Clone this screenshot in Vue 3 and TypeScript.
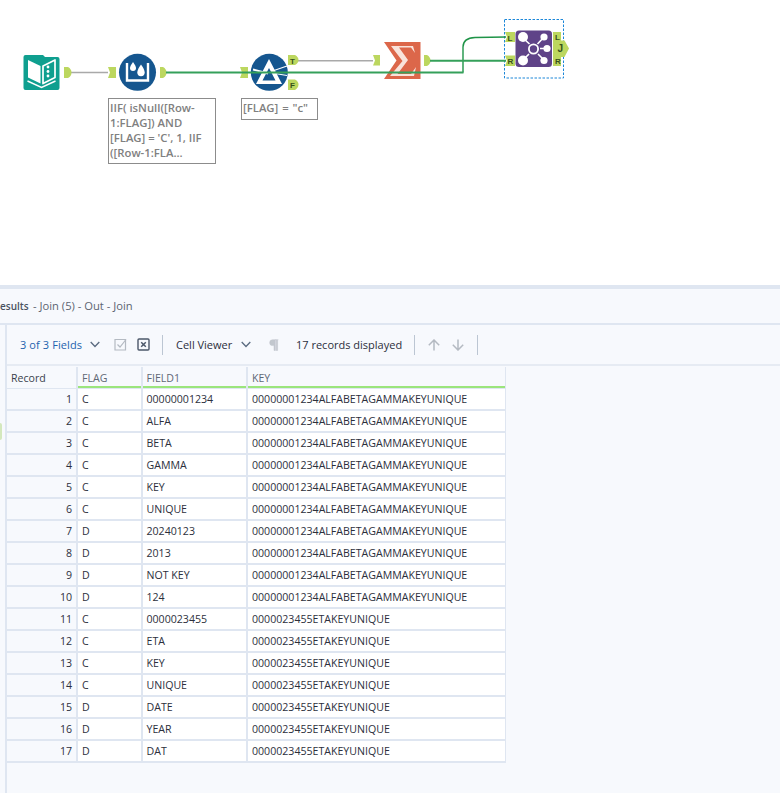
<script setup lang="ts">
interface Row { flag: string; field: string; key: string }
const a = '00000001234ALFABETAGAMMAKEYUNIQUE'
const b = '0000023455ETAKEYUNIQUE'
const rows: Row[] = [
  { flag: 'C', field: '00000001234', key: a },
  { flag: 'C', field: 'ALFA', key: a },
  { flag: 'C', field: 'BETA', key: a },
  { flag: 'C', field: 'GAMMA', key: a },
  { flag: 'C', field: 'KEY', key: a },
  { flag: 'C', field: 'UNIQUE', key: a },
  { flag: 'D', field: '20240123', key: a },
  { flag: 'D', field: '2013', key: a },
  { flag: 'D', field: 'NOT KEY', key: a },
  { flag: 'D', field: '124', key: a },
  { flag: 'C', field: '0000023455', key: b },
  { flag: 'C', field: 'ETA', key: b },
  { flag: 'C', field: 'KEY', key: b },
  { flag: 'C', field: 'UNIQUE', key: b },
  { flag: 'D', field: 'DATE', key: b },
  { flag: 'D', field: 'YEAR', key: b },
  { flag: 'D', field: 'DAT', key: b },
]
</script>

<template>
  <div class="page">
    <section class="canvas">
      <svg class="flow" width="780" height="285" viewBox="0 0 780 285">
        <!-- grey connectors -->
        <path d="M71 72.5H108" stroke="#a9a9a9" stroke-width="1.5" fill="none" />
        <path d="M298 60.7H373" stroke="#a9a9a9" stroke-width="1.5" fill="none" />

        <!-- input tool -->
        <path d="M25.5 55H43L45 57H57.5Q59.5 57 59.5 59V88Q59.5 90 57.5 90H25.5Q23.5 90 23.5 88V57Q23.5 55 25.5 55Z" fill="#0f9f8f" />
        <path d="M28 60L40.5 66V83.5L28 77.5Z" fill="#fff" />
        <path d="M43 66L55 60V77.5L43 83.5Z" fill="none" stroke="#fff" stroke-width="1.7" stroke-linejoin="round" />
        <path d="M27.5 81L41.5 87.5L55.5 81" fill="none" stroke="#fff" stroke-width="1.4" />
        <circle cx="48" cy="67" r="1.4" fill="#fff" />
        <circle cx="48" cy="71.5" r="1.4" fill="#fff" />
        <circle cx="48" cy="76" r="1.4" fill="#fff" />
        <path d="M64 67H68Q71.5 69 71.5 72.5T68 78H64Z" fill="#bcd75f" />

        <!-- formula tool -->
        <path d="M108 67H116V78H108L110 72.5Z" fill="#bcd75f" />
        <circle cx="137.5" cy="72.3" r="18.5" fill="#15568f" />
        <path d="M127 63V80.5H148V63" fill="none" stroke="#fff" stroke-width="2.4" />
        <path d="M133 62Q130 66 130 68A3 3 0 0 0 136 68Q136 66 133 62Z" fill="#fff" />
        <path d="M141 64.5Q137.3 69.5 137.3 72.5A3.7 3.7 0 0 0 144.7 72.5Q144.7 69.5 141 64.5Z" fill="#fff" />
        <path d="M160 67H163Q166.5 69 166.5 72.5T163 78H160Z" fill="#bcd75f" />

        <!-- filter tool -->
        <path d="M240 67H248V78H240L242 72.5Z" fill="#bcd75f" />
        <circle cx="269.3" cy="72.3" r="18.5" fill="#15568f" />
        <path d="M269 59L282 84H256Z M269 68L275.5 80.5H262.5Z" fill="#fff" fill-rule="evenodd" />
        <path d="M253 69.5L268 73.5" stroke="#fff" stroke-width="2" fill="none" />
        <path d="M274 70.5L287 66M275 73.5L287 75.5" stroke="#fff" stroke-width="1.2" fill="none" />
        <path d="M288 55H295Q298.5 57 298.5 60T295 65H288Z" fill="#bcd75f" />
        <path d="M288 79.5H295Q298.5 81.5 298.5 84.5T295 90H288Z" fill="#bcd75f" />
        <text x="290" y="63.5" class="anchor">T</text>
        <text x="290" y="88" class="anchor">F</text>

        <!-- summarize tool -->
        <path d="M373 55H380V65.5H373L375 60.5Z" fill="#bcd75f" />
        <path d="M384 42H420.5V79H384L396.5 60.5Z" fill="#dc674a" />
        <path d="M391 46H413L415 53L411 47.5H399L408 60L397.5 74H411L416 67L414 76H390L402.5 61Z" fill="#f9e3db" />
        <path d="M424 55H427Q430.5 57 430.5 60.5T427 66H424Z" fill="#bcd75f" />

        <!-- join tool -->
        <rect x="504.5" y="19.5" width="59" height="58.5" fill="none" stroke="#1c87d8" stroke-width="1" stroke-dasharray="2.5 1.5" />
        <path d="M505 32H515V42H505L507 37Z" fill="#bcd75f" />
        <path d="M505 55.5H515V66H505L507 60.7Z" fill="#bcd75f" />
        <rect x="515.5" y="30.5" width="36.5" height="36.5" rx="3.5" fill="#5f4388" />
        <g stroke="#fff" stroke-width="1.6" fill="none">
          <path d="M523 38L529.5 44M544 37L537.5 44M529 54L523 60M538 54L544 60M540 48.5H547" />
          <circle cx="533.5" cy="49" r="4.6" stroke-width="1.8" />
        </g>
        <g fill="#fff">
          <circle cx="523" cy="37" r="5" />
          <circle cx="544" cy="37" r="3.6" />
          <circle cx="547" cy="48.5" r="3.6" />
          <circle cx="523" cy="60.5" r="5" />
          <circle cx="544" cy="60.5" r="3.6" />
        </g>
        <path d="M553 32H561V41H553Z M553 56.5H561V66H553Z" fill="#bcd75f" />
        <path d="M553 40.5H564.5L569 48.5L564.5 57H553Z" fill="#bcd75f" />

        <!-- green connectors run over the tools -->
        <path d="M463 72.5V47Q463 38 475 37.5L506 37" stroke="#1f9448" stroke-width="1.4" fill="none" />
        <path d="M166 72.5H463.5" stroke="#35a05a" stroke-width="2" fill="none" />
        <path d="M430 60.7H506" stroke="#35a05a" stroke-width="2" fill="none" />

        <text x="507.5" y="40.5" class="anchor">L</text>
        <text x="507.5" y="64" class="anchor">R</text>
        <text x="555" y="39.5" class="anchor">L</text>
        <text x="557.5" y="52" class="anchor anchor-j">J</text>
        <text x="555" y="64" class="anchor">R</text>
      </svg>

      <div class="note note-formula">IIF( isNull([Row-<br />1:FLAG]) AND<br />[FLAG] = 'C', 1, IIF<br />([Row-1:FLA...</div>
      <div class="note note-filter">[FLAG] = "c"</div>
    </section>

    <div class="band band-top"></div>
    <header class="title"><b>esults</b><span class="crumb">- Join (5) - Out - Join</span></header>
    <div class="band band-mid"></div>

    <div class="body">
      <aside class="rail"><span class="rail-mark"></span></aside>
      <main class="main">
        <div class="toolbar">
          <span class="fields">3 of 3 Fields</span>
          <svg class="chev" width="10" height="7" viewBox="0 0 10 7"><path d="M.7 1L5 5.5L9.3 1" stroke="#5a6b80" stroke-width="1.3" fill="none" /></svg>
          <svg class="ic-check" width="13" height="13" viewBox="0 0 13 13"><path d="M1 1.5H11.5V12H1Z" fill="none" stroke="#b4bac2" stroke-width="1.2" /><path d="M3.5 6.5L6 9L12 1.5" fill="none" stroke="#b4bac2" stroke-width="1.2" /></svg>
          <svg class="ic-x" width="13" height="13" viewBox="0 0 13 13"><rect x="1" y="1" width="11" height="11" rx="1" fill="none" stroke="#4c586a" stroke-width="1.4" /><path d="M4.2 4.2L8.8 8.8M8.8 4.2L4.2 8.8" stroke="#4c586a" stroke-width="1.5" /></svg>
          <span class="sep sep-a"></span>
          <span class="viewer">Cell Viewer</span>
          <svg class="chev chev-b" width="10" height="7" viewBox="0 0 10 7"><path d="M.7 1L5 5.5L9.3 1" stroke="#5a6b80" stroke-width="1.3" fill="none" /></svg>
          <svg class="ic-para" width="10" height="12" viewBox="0 0 10 12"><path d="M9.5 .7H3.6A2.9 2.9 0 0 0 3.6 6.6H5V11.5H6.4V.7H7.2V11.5H8.6V.7" fill="#c2c7ce" stroke="#c2c7ce" stroke-width=".5" /></svg>
          <span class="count">17 records displayed</span>
          <span class="sep sep-b"></span>
          <svg class="ic-up" width="12" height="12" viewBox="0 0 12 12"><path d="M6 11.5V1M.8 6.2L6 1L11.2 6.2" stroke="#b4bac2" stroke-width="1.5" fill="none" /></svg>
          <svg class="ic-down" width="12" height="12" viewBox="0 0 12 12"><path d="M6 .5V11M.8 5.8L6 11L11.2 5.8" stroke="#b4bac2" stroke-width="1.5" fill="none" /></svg>
          <span class="sep sep-c"></span>
        </div>
        <div class="grid">
          <div class="hd">Record</div>
          <div class="hd field">FLAG</div>
          <div class="hd field">FIELD1</div>
          <div class="hd field">KEY</div>
          <template v-for="(r, i) in rows" :key="i">
            <div class="cell num">{{ i + 1 }}</div>
            <div class="cell">{{ r.flag }}</div>
            <div class="cell">{{ r.field }}</div>
            <div class="cell">{{ r.key }}</div>
          </template>
        </div>
      </main>
    </div>
  </div>
</template>

<style>
html, body { margin: 0; background: #f7f9fd; overflow: hidden; }
</style>

<style scoped>
.page {
  width: 780px;
  height: 793px;
  display: flex;
  flex-direction: column;
  overflow: hidden;
  font-family: "Open Sans", "Noto Sans", sans-serif;
  font-size: 11px;
  color: #2c2f3c;
  background: #f7f9fd;
}
.canvas { position: relative; height: 285px; flex: none; background: #fff; }
.flow { position: absolute; left: 0; top: 0; }
.anchor { font: 700 8px "Liberation Sans", sans-serif; fill: #35511a; }
.anchor-j { font-size: 10px; }
.note {
  position: absolute;
  box-sizing: border-box;
  border: 1px solid #8c8c8c;
  background: #fff;
  color: #808080;
  font-weight: 600;
  font-size: 11.3px;
  line-height: 15px;
  padding: 1px 1px 0 1px;
  white-space: nowrap;
}
.note-formula { left: 108px; top: 98px; width: 108px; height: 66px; }
.note-filter { left: 241px; top: 98px; width: 77px; height: 22px; word-spacing: 1px; }
.band { flex: none; background: #dfe6f1; }
.band-top { height: 4px; }
.band-mid { height: 2px; }
.title {
  flex: none;
  height: 34px;
  line-height: 34px;
  font-size: 11.2px;
  color: #5d6572;
  white-space: nowrap;
  display: flex;
}
.title b { color: #4a5260; font-weight: 600; font-size: 10px; width: 33px; flex: none; }
.body { flex: 1; display: flex; min-height: 0; }
.rail { position: relative; flex: none; width: 5px; border-right: 2px solid #dfe6f1; background: #f7f9fd; }
.rail-mark { position: absolute; left: 0; top: 98px; width: 2px; height: 17px; background: #d4e8bd; border-radius: 0 2px 2px 0; }
.main { flex: 1; min-width: 0; }
.toolbar {
  box-sizing: border-box;
  height: 41px;
  display: flex;
  align-items: center;
  border-bottom: 2px solid #e6ebf3;
}
.toolbar svg, .toolbar span { flex: none; }
.fields { margin-left: 13px; color: #1e63ae; width: 62px; white-space: nowrap; letter-spacing: .1px; }
.chev { margin-left: 8px; }
.ic-check { margin-left: 14px; }
.ic-x { margin-left: 10px; }
.sep { width: 1px; height: 20px; background: #bcc6d3; }
.sep-a { margin-left: 12px; }
.viewer { margin-left: 13px; width: 57px; white-space: nowrap; }
.chev-b { margin-left: 8px; }
.ic-para { margin-left: 18px; }
.count { margin-left: 17px; width: 107px; white-space: nowrap; }
.sep-b { margin-left: 11px; }
.ic-up { margin-left: 13px; }
.ic-down { margin-left: 12px; }
.sep-c { margin-left: 13px; }
.grid {
  display: grid;
  grid-template-columns: 69px 62.5px 103.5px 257px;
  grid-auto-rows: 20px;
  row-gap: 2px;
  column-gap: 2px;
  width: max-content;
  margin-top: 1px;
  font-size: 10.6px;
  background: #dfe6f1;
  border-right: 1px solid #dfe6f1;
  border-bottom: 2px solid #dfe6f1;
}
.hd {
  height: 21px;
  box-sizing: border-box;
  line-height: 22px;
  padding-left: 4px;
  background: #f7f9fd;
  color: #3a3f4c;
}
.hd.field { color: #5f6875; border-bottom: 2px solid #9be57c; }
.cell {
  line-height: 20px;
  padding-left: 4px;
  background: #fff;
  white-space: nowrap;
  overflow: hidden;
}
.cell.num { text-align: right; padding: 0 4px 0 0; background: #f7f9fd; }
</style>
